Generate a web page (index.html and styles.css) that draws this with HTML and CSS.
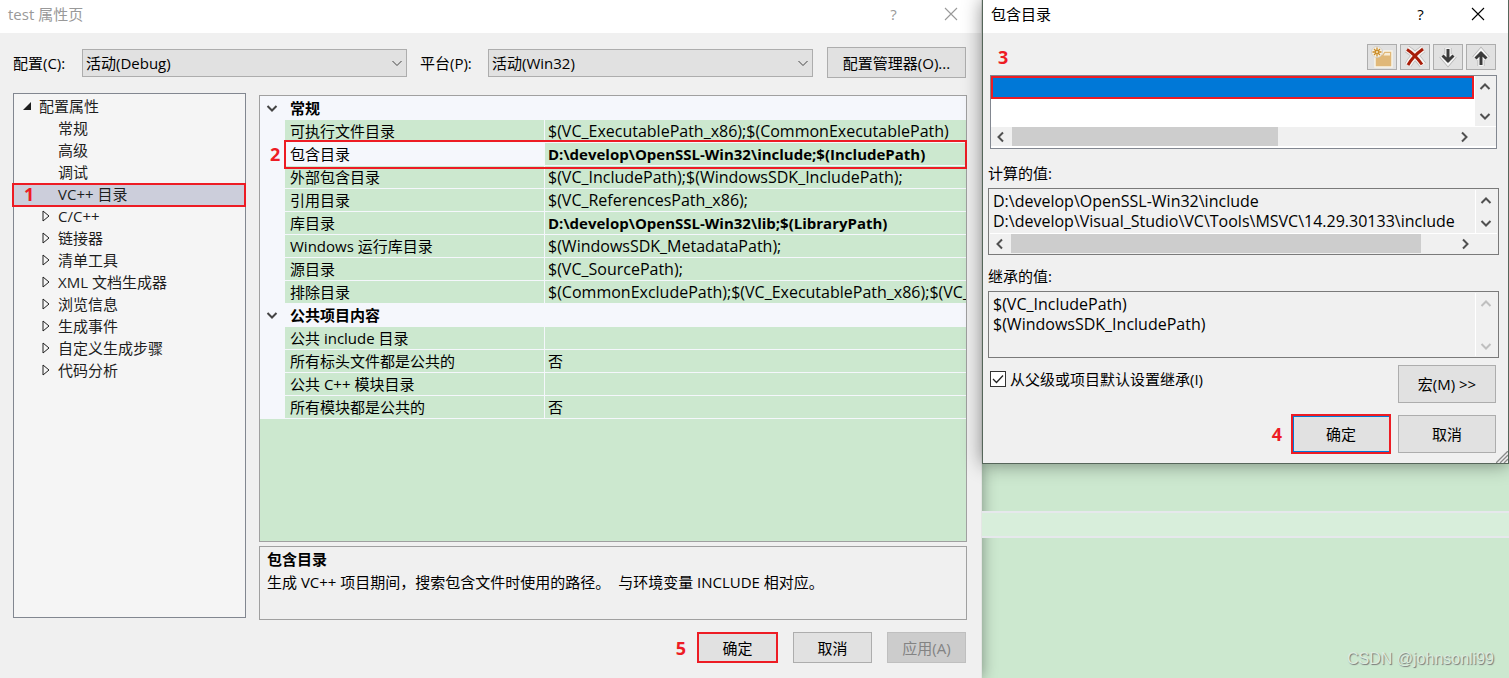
FILE: index.html
```html
<!doctype html>
<html lang="zh-CN">
<head>
  <meta charset="UTF-8">
  <meta name="viewport" content="width=device-width, initial-scale=1.0">
  <title>test 属性页</title>
  <link rel="stylesheet" href="styles.css">
</head>
<body>
<!-- Arrow shapes shared by selects, scrollbars and tree nodes -->
<svg class="sprite" aria-hidden="true">
  <symbol id="chevron" viewBox="0 0 12 12"><path d="M1.5 4 6 8.500 10.500 4" fill="none" stroke="currentColor"/></symbol>
  <symbol id="arrow" viewBox="0 0 12 12"><path d="M1.500 4 6 8.500 10.500 4" fill="none" stroke="currentColor" stroke-width="2"/></symbol>
  <symbol id="close" viewBox="0 0 14 14"><path d="M1 1l12 12M13 1 1 13" fill="none" stroke="currentColor" stroke-width="1.1"/></symbol>
  <symbol id="node" viewBox="0 0 8 12"><path d="M1 1v10L7 6z" fill="none" stroke="currentColor"/></symbol>
  <symbol id="node-open" viewBox="0 0 8 8"><path d="M8 0v8H0z" fill="currentColor"/></symbol>
</svg>

<main class="desktop">
  <section class="dialog dialog--main">
    <header class="titlebar titlebar--inactive">
      <h1 class="titlebar__text">test 属性页</h1>
      <button class="titlebar__button" aria-label="帮助">?</button>
      <button class="titlebar__button" aria-label="关闭"><svg class="icon-close"><use href="#close"/></svg></button>
    </header>

    <div class="config">
      <label class="config__label" for="config">配置(C):</label>
      <span class="combo">
        <select class="combo__select" id="config"><option>活动(Debug)</option></select>
        <svg class="combo__arrow"><use href="#chevron"/></svg>
      </span>
      <label class="config__label" for="platform">平台(P):</label>
      <span class="combo">
        <select class="combo__select" id="platform"><option>活动(Win32)</option></select>
        <svg class="combo__arrow"><use href="#chevron"/></svg>
      </span>
      <button class="button button--manager">配置管理器(O)...</button>
    </div>

    <div class="content">
      <nav class="tree">
        <ul class="tree__list">
          <li class="tree__item tree__item--root"><svg class="tree__open"><use href="#node-open"/></svg>配置属性</li>
          <li class="tree__item">常规</li>
          <li class="tree__item">高级</li>
          <li class="tree__item">调试</li>
          <li class="tree__item tree__item--selected">VC++ 目录<b class="step step--tree">1</b></li>
          <li class="tree__item"><svg class="tree__node"><use href="#node"/></svg>C/C++</li>
          <li class="tree__item"><svg class="tree__node"><use href="#node"/></svg>链接器</li>
          <li class="tree__item"><svg class="tree__node"><use href="#node"/></svg>清单工具</li>
          <li class="tree__item"><svg class="tree__node"><use href="#node"/></svg>XML 文档生成器</li>
          <li class="tree__item"><svg class="tree__node"><use href="#node"/></svg>浏览信息</li>
          <li class="tree__item"><svg class="tree__node"><use href="#node"/></svg>生成事件</li>
          <li class="tree__item"><svg class="tree__node"><use href="#node"/></svg>自定义生成步骤</li>
          <li class="tree__item"><svg class="tree__node"><use href="#node"/></svg>代码分析</li>
        </ul>
      </nav>

      <div class="details">
        <div class="grid">
          <table class="props">
            <colgroup><col class="props__gutter"><col class="props__names"><col></colgroup>
            <tbody>
            <tr class="props__group"><td><svg class="arrow"><use href="#arrow"/></svg></td><th colspan="2">常规</th></tr>
            <tr><td></td><th>可执行文件目录</th><td class="props__path">$(VC_ExecutablePath_x86);$(CommonExecutablePath)</td></tr>
            <tr class="props__selected"><td><b class="step step--row">2</b><span class="props__frame"></span></td><th>包含目录</th><td class="props__changed">D:\develop\OpenSSL-Win32\include;$(IncludePath)</td></tr>
            <tr><td></td><th>外部包含目录</th><td class="props__path">$(VC_IncludePath);$(WindowsSDK_IncludePath);</td></tr>
            <tr><td></td><th>引用目录</th><td class="props__path">$(VC_ReferencesPath_x86);</td></tr>
            <tr><td></td><th>库目录</th><td class="props__changed">D:\develop\OpenSSL-Win32\lib;$(LibraryPath)</td></tr>
            <tr><td></td><th>Windows 运行库目录</th><td class="props__path">$(WindowsSDK_MetadataPath);</td></tr>
            <tr><td></td><th>源目录</th><td class="props__path">$(VC_SourcePath);</td></tr>
            <tr><td></td><th>排除目录</th><td class="props__path">$(CommonExcludePath);$(VC_ExecutablePath_x86);$(VC_LibraryPath_x86)</td></tr>
            </tbody>
            <tbody>
            <tr class="props__group"><td><svg class="arrow"><use href="#arrow"/></svg></td><th colspan="2">公共项目内容</th></tr>
            <tr><td></td><th>公共 include 目录</th><td></td></tr>
            <tr><td></td><th>所有标头文件都是公共的</th><td>否</td></tr>
            <tr><td></td><th>公共 C++ 模块目录</th><td></td></tr>
            <tr><td></td><th>所有模块都是公共的</th><td>否</td></tr>
            </tbody>
          </table>
        </div>
        <div class="help">
          <h2 class="help__title">包含目录</h2>
          <p class="help__text">生成 VC++ 项目期间，搜索包含文件时使用的路径。&nbsp; 与环境变量 INCLUDE 相对应。</p>
        </div>
      </div>
    </div>

    <footer class="actions">
      <b class="step">5</b>
      <button class="button button--marked">确定</button>
      <button class="button">取消</button>
      <button class="button" disabled>应用(A)</button>
    </footer>
  </section>

  <div class="side">
    <section class="dialog dialog--paths">
      <header class="titlebar">
        <h1 class="titlebar__text">包含目录</h1>
        <button class="titlebar__button" aria-label="帮助">?</button>
        <button class="titlebar__button" aria-label="关闭"><svg class="icon-close"><use href="#close"/></svg></button>
      </header>

      <div class="paths">
        <div class="tools">
          <b class="step">3</b>
          <button class="tool" aria-label="新行">
            <svg viewBox="0 0 22 22">
              <path d="M4 8h7l2-3h8v16H4z" fill="#e0b878" stroke="#f8f3e8" stroke-width="1.5"/>
              <path d="M12.500 9.500H19V7h-5z" fill="#f8ecd5"/>
              <circle cx="6" cy="6" r="5.500" fill="#f8f3e8" stroke="#c4c0b8" stroke-width=".6"/>
              <path d="M6 1.500v9M1.500 6h9M3 3l6 6M9 3 3 9" stroke="#c98a25" stroke-width="1.3"/>
              <circle cx="6" cy="6" r="1.500" fill="#fff3d0" stroke="#c98a25"/>
            </svg>
          </button>
          <button class="tool" aria-label="删除">
            <svg viewBox="0 0 22 22" fill="none">
              <path d="M3 3c5 3 10 8 16 16M19 3C12 8 8 12 4 19" stroke="#bdbdbd" stroke-width="7.500"/>
              <path d="M3 3c5 3 10 8 16 16M19 3C12 8 8 12 4 19" stroke="#f7f4f2" stroke-width="6"/>
              <path d="M3 3.500c5 3 10 8 15 15M19 3C12 8 8 12 4 19" stroke="#a81c08" stroke-width="3"/>
            </svg>
          </button>
          <button class="tool" aria-label="下移">
            <svg viewBox="0 0 22 22" fill="none">
              <path d="M11 2v15M5 9l6 7 6-7" stroke="#b5b5b5" stroke-width="7"/>
              <path d="M11 2v15M5 9l6 7 6-7" stroke="#f6f6f6" stroke-width="5.500"/>
              <path d="M11 3v13M5.500 9.500 11 15l5.500-5.500" stroke="#3b3b3b" stroke-width="3"/>
            </svg>
          </button>
          <button class="tool" aria-label="上移">
            <svg viewBox="0 0 22 22" fill="none">
              <path d="M11 20V5M5 13l6-7 6 7" stroke="#b5b5b5" stroke-width="7"/>
              <path d="M11 20V5M5 13l6-7 6 7" stroke="#f6f6f6" stroke-width="5.500"/>
              <path d="M11 19V6M5.500 12.500 11 7l5.500 5.500" stroke="#3b3b3b" stroke-width="3"/>
            </svg>
          </button>
        </div>

        <div class="box box--list">
          <input class="box__edit" type="text" aria-label="包含目录">
          <div class="vscroll">
            <svg class="arrow arrow--up"><use href="#arrow"/></svg>
            <svg class="arrow"><use href="#arrow"/></svg>
          </div>
          <div class="hscroll">
            <svg class="arrow arrow--left"><use href="#arrow"/></svg>
            <div class="hscroll__track"><div class="hscroll__thumb" style="width: 60%"></div></div>
            <svg class="arrow arrow--right"><use href="#arrow"/></svg>
          </div>
        </div>

        <label class="paths__label" for="evaluated">计算的值:</label>
        <div class="box">
          <textarea class="box__text" id="evaluated" rows="2" readonly>D:\develop\OpenSSL-Win32\include
D:\develop\Visual_Studio\VC\Tools\MSVC\14.29.30133\include</textarea>
          <div class="vscroll">
            <svg class="arrow arrow--up"><use href="#arrow"/></svg>
            <svg class="arrow"><use href="#arrow"/></svg>
          </div>
          <div class="hscroll">
            <svg class="arrow arrow--left"><use href="#arrow"/></svg>
            <div class="hscroll__track"><div class="hscroll__thumb" style="width: 92%"></div></div>
            <svg class="arrow arrow--right"><use href="#arrow"/></svg>
          </div>
        </div>

        <label class="paths__label" for="inherited">继承的值:</label>
        <div class="box">
          <textarea class="box__text" id="inherited" rows="3" readonly>$(VC_IncludePath)
$(WindowsSDK_IncludePath)</textarea>
          <div class="vscroll vscroll--off">
            <svg class="arrow arrow--up"><use href="#arrow"/></svg>
            <svg class="arrow"><use href="#arrow"/></svg>
          </div>
        </div>

        <div class="options">
          <label class="check">
            <input class="check__input" type="checkbox" checked>
            <svg class="check__mark" viewBox="0 0 16 16"><path d="M3 8l3.500 3.500L13 4.500" fill="none" stroke="#222" stroke-width="1.300"/></svg>
            从父级或项目默认设置继承(I)
          </label>
          <button class="button button--large">宏(M) &gt;&gt;</button>
        </div>

        <div class="confirm">
          <b class="step">4</b>
          <button class="button button--large button--default">确定</button>
          <button class="button button--large">取消</button>
        </div>
      </div>
      <svg class="grip" viewBox="0 0 12 12"><path d="M0 12 12 0M4 12l8-8M8 12l4-4" stroke="#8a8a8a" stroke-width="1.300"/></svg>
    </section>

    <div class="editor">
      <div class="editor__line"></div>
      <p class="watermark">CSDN @johnsonli99</p>
    </div>
  </div>
</main>
</body>
</html>
```
FILE: styles.css
```css
* {
  box-sizing: border-box;
}

body {
  margin: 0;
  background: #cce8cf;
  color: #000;
  font: 15px/20px "Open Sans", "Noto Sans CJK SC", sans-serif;
}

button,
input,
select,
textarea {
  margin: 0;
  padding: 0;
  border: 0;
  border-radius: 0;
  color: inherit;
  font: inherit;
}

h1,
h2,
p,
ul {
  margin: 0;
  padding: 0;
  font-size: inherit;
}

.sprite {
  position: absolute;
  width: 0;
  height: 0;
}

.desktop {
  display: grid;
  grid-template-columns: minmax(0, 1fr) 527px;
  min-height: 100vh;
}

/* Dialog */

.dialog {
  position: relative;
  display: flex;
  flex-direction: column;
  background: #f0f0f0;
}

.dialog--main {
  border-right: 1px solid #e4e6e4;
  box-shadow: 0 0 14px rgba(0, 0, 0, .4);
}

.dialog--paths {
  z-index: 1;
  border: solid #56665a;
  border-width: 0 1px 1px;
  box-shadow: 0 0 18px rgba(0, 0, 0, .45);
}

.titlebar {
  display: flex;
  align-items: flex-start;
  height: 33px;
  padding: 0 8px;
  background: #fff;
}

.titlebar--inactive {
  color: #999;
}

.titlebar__text {
  flex: 1;
  font-weight: normal;
  line-height: 28px;
}

.titlebar__button {
  width: 45px;
  height: 28px;
  margin-right: 12px;
  background: none;
}

.titlebar__button:last-child {
  margin-right: 0;
}

.icon-close {
  display: block;
  width: 14px;
  height: 14px;
  margin: 0 auto;
}

/* Buttons */

.button {
  width: 79px;
  height: 31px;
  border: 1px solid #adadad;
  background: #e1e1e1;
}

.button:disabled {
  border-color: #bfbfbf;
  background: #ccc;
  color: #838383;
}

.button--manager {
  width: 139px;
}

.button--marked {
  width: 81px;
  border: 2px solid #ed1c24;
}

.button--large {
  width: 98px;
  height: 38px;
}

.button--default {
  width: 100px;
  height: 40px;
  border: 2px solid #ed1c24;
  box-shadow: inset 1px 1px #0078d7, inset 0 -1px #0078d7;
}

/* Red step numbers */

.step {
  color: #ed1c24;
  font-size: 18px;
}

/* Configuration row */

.config {
  display: flex;
  align-items: center;
  padding: 14px 15px 0 13px;
}

.config__label {
  width: 69px;
}

.combo + .config__label {
  width: 68px;
}

.combo {
  position: relative;
  flex: 1;
  margin-right: 13px;
}

.combo:nth-last-child(2) {
  margin-right: 14px;
}

.combo__select {
  display: block;
  width: 100%;
  height: 28px;
  padding: 0 24px 0 3px;
  border: 1px solid #adadad;
  background: #e1e1e1;
  appearance: none;
}

.combo__arrow {
  position: absolute;
  top: 8px;
  right: 4px;
  width: 12px;
  height: 12px;
  color: #444;
  pointer-events: none;
}

.content {
  display: flex;
  flex: 1;
  gap: 13px;
  padding: 15px 14px 12px 13px;
}

/* Tree */

.tree {
  width: 233px;
  margin-bottom: 2px;
  padding-top: 1px;
  border: 1px solid #828790;
  background: #f5f5f5;
  color: #1e1e1e;
}

.tree__list {
  list-style: none;
}

.tree__item {
  display: flex;
  align-items: center;
  height: 22px;
  padding-left: 44px;
}

.tree__item--root {
  padding-left: 9px;
}

.tree__open {
  width: 8px;
  height: 8px;
  margin-right: 8px;
}

.tree__node {
  width: 8px;
  height: 12px;
  margin: 0 8px 0 -16px;
}

.tree__item--selected {
  position: relative;
  background: #cccedb;
}

/* Frames lie over the rows, so they do not shift the text */
.tree__item--selected::after {
  content: "";
  position: absolute;
  inset: 0 -1px -2px -2px;
  border: 2px solid #ed1c24;
}

.step--tree {
  position: absolute;
  left: 10px;
}

/* Property grid */

.details {
  display: flex;
  flex: 1;
  flex-direction: column;
  gap: 4px;
  min-width: 0;
  padding-top: 2px;
}

.grid {
  flex: 1;
  border: 1px solid #a0a0a0;
  background: #cce8cf;
}

.props {
  width: 100%;
  border-top: 1px solid #f5f7fc;
  border-spacing: 0;
  table-layout: fixed;
}

.props__gutter {
  width: 25px;
}

.props__names {
  width: 260px;
}

.props td,
.props th {
  height: 23px;
  padding: 0 0 0 3px;
  overflow: hidden;
  border-bottom: 1px solid #f5f7fc;
  font-weight: normal;
  line-height: 22px;
  text-align: left;
  white-space: nowrap;
}

.props th {
  padding-left: 5px;
  border-right: 1px solid #f5f7fc;
}

.props td:first-child {
  padding: 0;
  background: #f5f7fc;
}

.props .props__group th {
  background: #f5f7fc;
  font-weight: bold;
}

.props__path {
  font-size: 16px;
}

.props .props__changed {
  font-weight: bold;
}

.props__group .arrow {
  display: block;
  margin-left: 6px;
}

.props__selected {
  position: relative;
}

.props__selected th {
  background: #f5f7fc;
}

.props__frame {
  position: absolute;
  inset: -3px -1px -3px 24px;
  border: 2px solid #ed1c24;
}

.step--row {
  display: block;
  padding-left: 10px;
}

.help {
  height: 74px;
  padding: 2px 7px;
  border: 1px solid #a0a0a0;
}

.help__text {
  margin-top: 3px;
}

.actions {
  display: flex;
  align-items: center;
  justify-content: flex-end;
  gap: 15px;
  padding: 0 15px 15px;
}

.actions .step {
  margin-right: -4px;
}

/* Include paths dialog */

.side {
  display: flex;
  flex-direction: column;
}

.paths {
  display: flex;
  flex-direction: column;
  padding: 11px 9px 9px 5px;
}

.tools {
  display: flex;
  align-items: center;
  gap: 3px;
  margin: 0 3px 5px 10px;
}

.tools .step {
  margin-right: auto;
}

.tool {
  width: 30px;
  height: 26px;
  border: 1px solid #adadad;
  background: #e1e1e1;
}

.tool svg {
  display: block;
  width: 22px;
  height: 22px;
  margin: 0 auto;
}

.box {
  display: grid;
  grid-template-columns: minmax(0, 1fr) 22px;
  grid-template-rows: minmax(0, 1fr) auto;
  height: 67px;
  padding: 1px;
  border: 1px solid #7a7a7a;
}

.box--list {
  height: 74px;
  margin: 0 2px;
  padding: 0 0 2px;
  border-color: #828790;
  background: #fff;
}

.box__edit {
  height: 23px;
  border: 2px solid #ed1c24;
  background: #0078d7;
}

.box__text {
  display: block;
  width: 100%;
  padding: 1px 3px 0;
  overflow: hidden;
  background: #f0f0f0;
  font-size: 16px;
  resize: none;
  white-space: pre;
}

.vscroll {
  display: flex;
  flex-direction: column;
  align-items: center;
  justify-content: space-between;
  padding: 5px 2px 4px 1px;
  border-left: 1px solid #fff;
  background: #f0f0f0;
  color: #505050;
}

.vscroll--off {
  color: #bfbfbf;
}

.hscroll {
  display: flex;
  grid-column: 1 / -1;
  align-items: center;
  height: 20px;
  padding: 0 26px 0 4px;
  border-top: 1px solid #fff;
  background: #f0f0f0;
  color: #505050;
}

.hscroll__track {
  flex: 1;
  height: 19px;
  margin: 0 2px 0 5px;
}

.hscroll__thumb {
  height: 100%;
  background: #cdcdcd;
}

.arrow {
  width: 12px;
  height: 12px;
  color: #444;
}

.vscroll .arrow,
.hscroll .arrow {
  flex: none;
  color: inherit;
}

.arrow--up {
  transform: rotate(180deg);
}

.arrow--left {
  transform: rotate(90deg);
}

.arrow--right {
  transform: rotate(-90deg);
}

.paths__label {
  margin: 11px 0 5px;
}

.box--list + .paths__label {
  margin-top: 14px;
}

.options {
  display: flex;
  align-items: flex-start;
  justify-content: space-between;
  margin: 7px 3px 0 2px;
}

.check {
  position: relative;
  display: flex;
  align-items: center;
  gap: 4px;
  margin-top: 4px;
}

.check__input {
  width: 16px;
  height: 16px;
  border: 1px solid #333;
  background: #fff;
  appearance: none;
}

.check__mark {
  position: absolute;
  left: 0;
  width: 16px;
  height: 16px;
}

.check__input:not(:checked) + .check__mark {
  display: none;
}

.confirm {
  display: flex;
  align-items: center;
  justify-content: flex-end;
  gap: 7px;
  margin: 11px 3px 0;
}

.confirm .step {
  margin-right: 2px;
}

.grip {
  position: absolute;
  right: 0;
  bottom: 0;
  width: 12px;
  height: 12px;
}

/* Editor behind the dialogs */

.editor {
  position: relative;
  flex: 1;
  padding-top: 47px;
}

.editor__line {
  height: 27px;
  border: solid #e6e8ec;
  border-width: 2px 0;
  background: #d8eedb;
}

.watermark {
  position: absolute;
  right: 15px;
  bottom: 9px;
  color: #dcebde;
  font: 16px/20px "Liberation Sans", sans-serif;
  text-shadow: 1px 1px 1px #777;
}
```
